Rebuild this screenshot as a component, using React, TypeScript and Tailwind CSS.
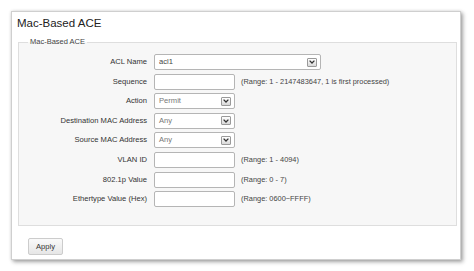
import React from "react";

type Row = {
  label: string;
  kind: "select" | "input";
  value?: string;
  wide?: boolean;
  hint?: string;
};

const ROWS: Row[] = [
  { label: "ACL Name", kind: "select", value: "acl1", wide: true },
  { label: "Sequence", kind: "input", hint: "(Range: 1 - 2147483647, 1 is first processed)" },
  { label: "Action", kind: "select", value: "Permit" },
  { label: "Destination MAC Address", kind: "select", value: "Any" },
  { label: "Source MAC Address", kind: "select", value: "Any" },
  { label: "VLAN ID", kind: "input", hint: "(Range: 1 - 4094)" },
  { label: "802.1p Value", kind: "input", hint: "(Range: 0 - 7)" },
  { label: "Ethertype Value (Hex)", kind: "input", hint: "(Range: 0600~FFFF)" },
];

function Arrow() {
  return (
    <span className="flex h-[9px] w-[10px] items-center justify-center rounded-[1px] border border-[#9a9a9a] bg-gradient-to-b from-white to-[#d8d8d8]">
      <svg width="6" height="4" viewBox="0 0 6 4">
        <path d="M0.6 0.6 L3 3 L5.4 0.6" fill="none" stroke="#333" strokeWidth="1.3" />
      </svg>
    </span>
  );
}

function Control({ row }: { row: Row }) {
  const width = row.wide ? "w-[167px]" : "w-[81px]";
  if (row.kind === "select") {
    return (
      <div className={`flex h-[16px] ${width} items-center justify-between rounded-[2px] border border-[#b5b5b5] bg-white pl-[4px] pr-[3px]`}>
        <span className={row.value === "acl1" ? "text-[#444]" : "text-[#777]"}>{row.value}</span>
        <Arrow />
      </div>
    );
  }
  return <div className={`h-[16px] ${width} rounded-[2px] border border-[#b5b5b5] bg-white`} />;
}

export default function App() {
  return (
    <div className="h-[271px] w-[474px] bg-white pl-[11px] pt-[11px] font-['Liberation_Sans',Arial,sans-serif]">
      <div className="h-[249px] w-[450px] border border-[#cfcfcf] bg-white px-[5px] pt-[4px] shadow-[2px_2px_4px_rgba(0,0,0,0.35),0_0_3px_rgba(0,0,0,0.12)]">
        <h1 className="text-[11.5px] leading-[14px] text-[#222]">Mac-Based ACE</h1>

        <fieldset className="mt-[7px] ml-[1px] mr-0 w-[439px] border border-[#dedede] bg-[#f7f7f7] pb-[18px] pt-[7px]">
          <legend className="ml-[9px] px-[2px] text-[7.5px] leading-[10px] text-[#444]">Mac-Based ACE</legend>
          <div className="flex flex-col gap-[3.6px] text-[7.6px] leading-[16px]">
            {ROWS.map((row) => (
              <div key={row.label} className="flex h-[16px] items-center">
                <span className="w-[128px] text-right text-[#333]">{row.label}</span>
                <div className="ml-[7px]">
                  <Control row={row} />
                </div>
                {row.hint && <span className="ml-[6px] text-[7.4px] text-[#444]">{row.hint}</span>}
              </div>
            ))}
          </div>
        </fieldset>

        <button className="ml-[11px] mt-[12px] h-[17px] w-[35px] rounded-[2px] border border-[#cccccc] bg-gradient-to-b from-[#fafafa] to-[#e6e6e6] text-[7.6px] text-[#333]">
          Apply
        </button>
      </div>
    </div>
  );
}
